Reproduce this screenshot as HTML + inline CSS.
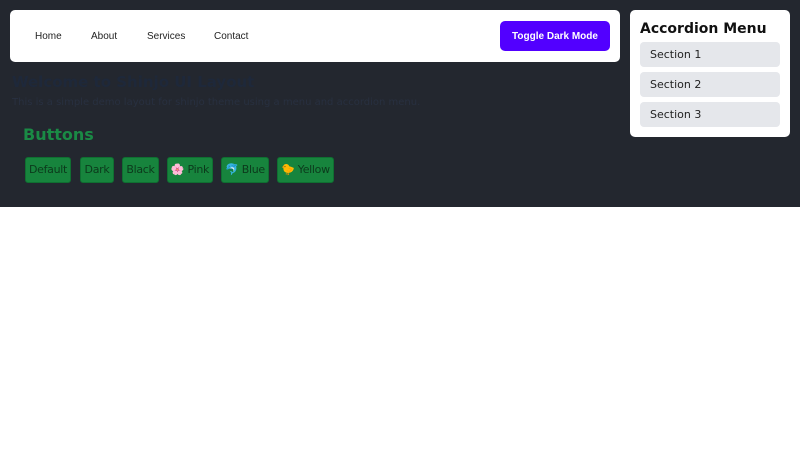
<!DOCTYPE html>
<html><head><meta charset="utf-8"><style>
*{margin:0;padding:0;box-sizing:border-box}
body{width:800px;height:450px;background:#fff;font-family:"DejaVu Sans","Liberation Sans",sans-serif;position:relative;overflow:hidden}
.dark{position:absolute;left:0;top:0;width:800px;height:207px;background:#23272f}
.nav{position:absolute;left:10px;top:10px;width:610px;height:52px;background:#fff;border-radius:5px;font-family:"Liberation Sans",sans-serif}
.nav a{position:absolute;top:21px;font-size:10px;color:#222;text-decoration:none}
.tog{position:absolute;left:490px;top:11px;width:110px;height:30px;background:#5200ff;border-radius:5px;color:#fff;font-size:10px;font-weight:bold;text-align:center;line-height:31px}
h1{position:absolute;left:12px;top:73px;font-size:15px;color:#1e283a;font-weight:bold;white-space:nowrap}
p.d{position:absolute;left:12px;top:97px;font-size:10px;color:#283040;white-space:nowrap}
h2{position:absolute;left:23px;top:125px;font-size:16px;color:#1a8a45;font-weight:bold}
.btn{position:absolute;top:157px;height:26px;background:#17843d;border:1px solid #0f6f31;border-radius:3px;color:#0c3a1c;font-size:11px;letter-spacing:-0.3px;line-height:24px;text-align:center;white-space:nowrap}
.acc{position:absolute;left:630px;top:10px;width:160px;height:127px;background:#fff;border-radius:5px}
.acc h3{position:absolute;left:10px;top:11px;font-size:14px;font-weight:bold;color:#111}
.sec{position:absolute;left:10px;width:140px;height:25px;background:#e5e7eb;border-radius:4px;font-size:11px;color:#222;padding-left:10px;line-height:25px}
</style></head><body>
<div class="dark"></div>
<div class="nav">
<a style="left:25px">Home</a><a style="left:81px">About</a><a style="left:137px">Services</a><a style="left:204px">Contact</a>
<div class="tog">Toggle Dark Mode</div>
</div>
<h1>Welcome to Shinjo UI Layout</h1>
<p class="d">This is a simple demo layout for shinjo theme using a menu and accordion menu.</p>
<h2>Buttons</h2>
<div class="btn" style="left:25px;width:46px">Default</div>
<div class="btn" style="left:80px;width:34px">Dark</div>
<div class="btn" style="left:122px;width:37px">Black</div>
<div class="btn" style="left:167px;width:46px">🌸 Pink</div>
<div class="btn" style="left:221px;width:48px">🐬 Blue</div>
<div class="btn" style="left:277px;width:57px">🐤 Yellow</div>
<div class="acc"><h3>Accordion Menu</h3>
<div class="sec" style="top:32px">Section 1</div>
<div class="sec" style="top:62px">Section 2</div>
<div class="sec" style="top:92px">Section 3</div>
</div>
</body></html>
